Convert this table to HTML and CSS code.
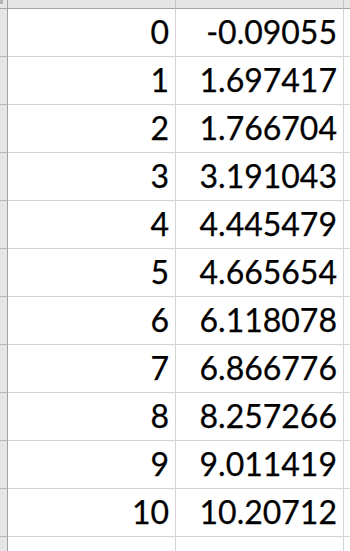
FILE: index.html
```html
<!DOCTYPE html>
<html>
<head>
<meta charset="utf-8">
<link rel="stylesheet" href="styles.css">
</head>
<body>
<div class="sheet">
  <div class="corner"><div class="corner-mark"></div></div>
  <div class="col-head"></div>
  <div class="col-head"></div>
  <div class="col-head last"></div>

  <div class="row-head"></div><div class="cell">0</div><div class="cell">-0.09055</div><div class="cell empty"></div>
  <div class="row-head"></div><div class="cell">1</div><div class="cell">1.697417</div><div class="cell empty"></div>
  <div class="row-head"></div><div class="cell">2</div><div class="cell">1.766704</div><div class="cell empty"></div>
  <div class="row-head"></div><div class="cell">3</div><div class="cell">3.191043</div><div class="cell empty"></div>
  <div class="row-head"></div><div class="cell">4</div><div class="cell">4.445479</div><div class="cell empty"></div>
  <div class="row-head"></div><div class="cell">5</div><div class="cell">4.665654</div><div class="cell empty"></div>
  <div class="row-head"></div><div class="cell">6</div><div class="cell">6.118078</div><div class="cell empty"></div>
  <div class="row-head"></div><div class="cell">7</div><div class="cell">6.866776</div><div class="cell empty"></div>
  <div class="row-head"></div><div class="cell">8</div><div class="cell">8.257266</div><div class="cell empty"></div>
  <div class="row-head"></div><div class="cell">9</div><div class="cell">9.011419</div><div class="cell empty"></div>
  <div class="row-head"></div><div class="cell">10</div><div class="cell">10.20712</div><div class="cell empty"></div>
  <div class="row-head"></div><div class="cell"></div><div class="cell"></div><div class="cell empty"></div>
</div>
</body>
</html>
```

FILE: styles.css
```css
html, body {
  margin: 0;
  padding: 0;
  background: #ffffff;
  overflow: hidden;
}

.sheet {
  display: grid;
  grid-template-columns: 8px 168px 168px 1fr;
  grid-template-rows: 9px;
  grid-auto-rows: 48px;
  width: 350px;
  height: 551px;
  overflow: hidden;
  font-family: "Lato", "Liberation Sans", sans-serif;
  font-size: 32px;
  color: #000000;
  -webkit-text-stroke: 0.25px #000000;
}

.sheet > div {
  box-sizing: border-box;
}

.corner {
  background: #e6e6e6;
  border-right: 1px solid #a3a3a3;
  border-bottom: 1px solid #a3a3a3;
}

.corner-mark {
  width: 3px;
  height: 4px;
  background: #b5b5b5;
}

.col-head {
  background: #e6e6e6;
  border-right: 1px solid #c6c6c6;
  border-bottom: 1px solid #a3a3a3;
}

.col-head.last {
  border-right: none;
}

.row-head {
  background: #e6e6e6;
  border-right: 1px solid #a3a3a3;
  border-bottom: 1px solid #b8b8b8;
}

.cell {
  border-right: 1px solid #d4d4d4;
  border-bottom: 1px solid #d4d4d4;
  text-align: right;
  padding: 4px 6px 0 0;
  line-height: 37px;
  white-space: nowrap;
}

.cell.empty {
  border-right: none;
}
```
